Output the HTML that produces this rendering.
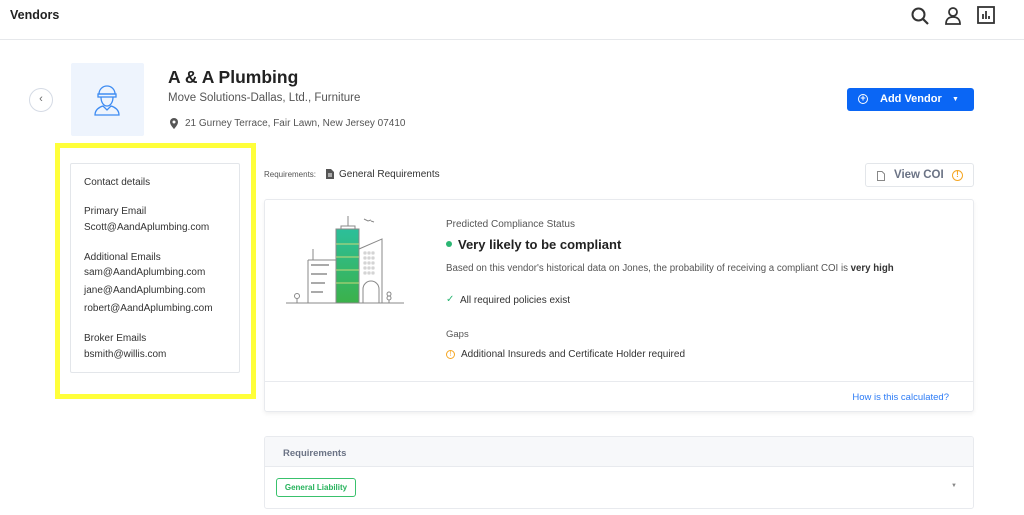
<!DOCTYPE html>
<html><head><meta charset="utf-8"><style>
*{box-sizing:border-box;margin:0;padding:0}
body{width:1024px;height:515px;background:#fff;font-family:"Liberation Sans",sans-serif;position:relative;overflow:hidden;color:#222}
.a{position:absolute;white-space:nowrap}
</style></head><body>
<div class="a" style="left:10px;top:8px;font-size:12.5px;font-weight:bold;color:#222">Vendors</div>
<svg class="a" style="left:910px;top:6px" width="20" height="20" viewBox="0 0 20 20"><circle cx="8.5" cy="8.5" r="6" fill="none" stroke="#333" stroke-width="2"/><path d="M13 13l5 5" stroke="#333" stroke-width="2.2"/></svg>
<svg class="a" style="left:944px;top:6px" width="18" height="20" viewBox="0 0 18 20"><circle cx="9" cy="6" r="4" fill="none" stroke="#333" stroke-width="1.8"/><path d="M2 18c0-5 3-7 7-7s7 2 7 7z" fill="none" stroke="#333" stroke-width="1.8"/></svg>
<svg class="a" style="left:977px;top:6px" width="18" height="18" viewBox="0 0 18 18"><rect x="1" y="1" width="16" height="16" fill="none" stroke="#333" stroke-width="1.8"/><path d="M6 13V8M9 13V5M12 13v-3" stroke="#333" stroke-width="1.8"/></svg>
<div class="a" style="left:0;top:39px;width:1024px;height:1px;background:#e6e8eb"></div>

<div class="a" style="left:29px;top:88px;width:24px;height:24px;border:1px solid #d5dbe5;border-radius:50%;font-size:11px;color:#666;text-align:center;line-height:21px">‹</div>
<div class="a" style="left:71px;top:63px;width:73px;height:73px;background:#eef4fd;border-radius:2px"></div>
<svg class="a" style="left:91px;top:82px" width="32" height="34" viewBox="0 0 32 34"><g fill="none" stroke="#3d8bf2" stroke-width="1.3"><path d="M8 12a8 8 0 0 1 16 0z"/><rect x="7" y="12" width="18" height="3"/><path d="M10 15c0 6 3 9 6 9s6-3 6-9"/><path d="M4 33c0-5 4-8 8-9l4 4 4-4c4 1 8 4 8 9z"/></g></svg>
<div class="a" style="left:168px;top:67px;font-size:17.5px;font-weight:bold;color:#222">A &amp; A Plumbing</div>
<div class="a" style="left:168px;top:92px;font-size:11.5px;color:#555">Move Solutions-Dallas, Ltd., Furniture</div>
<svg class="a" style="left:170px;top:118px" width="8" height="11" viewBox="0 0 8 11"><path d="M4 0a4 4 0 0 1 4 4c0 3-4 7-4 7S0 7 0 4a4 4 0 0 1 4-4z" fill="#555"/><circle cx="4" cy="4" r="1.5" fill="#fff"/></svg>
<div class="a" style="left:185px;top:118px;font-size:10px;color:#555">21 Gurney Terrace, Fair Lawn, New Jersey 07410</div>

<div class="a" style="left:847px;top:88px;width:127px;height:23px;background:#0a66f5;border-radius:3px;color:#fff;font-size:11px;font-weight:bold;line-height:23px">
<span style="position:absolute;left:11px;top:6px;width:10px;height:10px;border:1.3px solid #fff;border-radius:50%;font-size:9px;line-height:7px;text-align:center">+</span>
<span style="position:absolute;left:33px">Add Vendor</span><span style="position:absolute;left:105px;font-size:7px">▼</span></div>

<div class="a" style="left:55px;top:143px;width:201px;height:256px;border:5px solid #ffff3a"></div>
<div class="a" style="left:70px;top:163px;width:170px;height:210px;border:1px solid #e3e6ea;border-radius:2px;font-size:10px;color:#333">
<div class="a" style="left:13px;top:13px">Contact details</div>
<div class="a" style="left:13px;top:42px">Primary Email</div>
<div class="a" style="left:13px;top:58px">Scott@AandAplumbing.com</div>
<div class="a" style="left:13px;top:88px">Additional Emails</div>
<div class="a" style="left:13px;top:103px">sam@AandAplumbing.com</div>
<div class="a" style="left:13px;top:121px">jane@AandAplumbing.com</div>
<div class="a" style="left:13px;top:139px">robert@AandAplumbing.com</div>
<div class="a" style="left:13px;top:169px">Broker Emails</div>
<div class="a" style="left:13px;top:185px">bsmith@willis.com</div>
</div>

<div class="a" style="left:264px;top:170px;font-size:8px;color:#555">Requirements:</div>
<svg class="a" style="left:326px;top:169px" width="8" height="10" viewBox="0 0 8 10"><path d="M0 0h5l3 3v7H0z" fill="#555"/><path d="M2 5h4M2 7h4" stroke="#fff"/></svg>
<div class="a" style="left:339px;top:169px;font-size:10px;color:#333">General Requirements</div>

<div class="a" style="left:865px;top:163px;width:109px;height:24px;border:1px solid #e3e6ea;border-radius:3px">
<svg class="a" style="left:11px;top:7px" width="8" height="10" viewBox="0 0 8 10"><path d="M.5.5h4.5l2.5 2.5v6.5h-7z" fill="none" stroke="#888"/></svg>
<div class="a" style="left:28px;top:5px;font-size:11.5px;font-weight:bold;color:#6b7385">View COI</div>
<div class="a" style="left:86px;top:6px;width:11px;height:11px;border:1.3px solid #f5a623;border-radius:50%;color:#f5a623;font-size:8px;line-height:8px;text-align:center;font-weight:bold">!</div>
</div>

<div class="a" style="left:264px;top:199px;width:710px;height:213px;border:1px solid #e8eaee;border-radius:3px;box-shadow:0 2px 5px rgba(0,0,0,.06)">
<div class="a" style="left:0;top:181px;width:708px;height:1px;background:#e8eaee"></div>
<div class="a" style="right:24px;top:192px;font-size:9.5px;color:#2d7cf6">How is this calculated?</div>
</div>
<svg class="a" style="left:286px;top:214px" width="120" height="92" viewBox="0 0 120 92">
<defs><linearGradient id="g" x1="0" y1="0" x2="0" y2="1"><stop offset="0" stop-color="#2cbf9a"/><stop offset="1" stop-color="#3bb14a"/></linearGradient></defs>
<g stroke="#888" stroke-width="1" fill="none">
<path d="M62 2v10M58 12h8M55 15v-3h14v3"/>
<rect x="50" y="15" width="23" height="74" fill="url(#g)"/>
<path d="M50 30h23M50 43h23M50 56h23M50 69h23" stroke="#c8d87a"/>
<path d="M73 35l23-10v64"/>
<path d="M22 46h28M27 46v-6M27 35v5"/>
<path d="M22 46v43M0 89h118"/>
<path d="M77 75a8 8 0 0 1 16 0v14M77 75v14"/>
<circle cx="11" cy="82" r="2.5"/><path d="M11 85v4"/>
<circle cx="103" cy="80" r="2"/><circle cx="103" cy="84" r="2"/><path d="M103 86v3"/>
<path d="M78 5l4 2 3-1M85 7l3 1"/>
</g>
<g fill="#aaa"><rect x="25" y="50" width="18" height="2"/><rect x="25" y="59" width="16" height="2"/><rect x="25" y="68" width="14" height="2"/><rect x="25" y="77" width="12" height="2"/></g>
<g fill="none" stroke="#aaa" stroke-width=".6">
<rect x="78" y="38" width="2" height="2"/><rect x="82" y="38" width="2" height="2"/><rect x="86" y="38" width="2" height="2"/>
<rect x="78" y="43" width="2" height="2"/><rect x="82" y="43" width="2" height="2"/><rect x="86" y="43" width="2" height="2"/>
<rect x="78" y="48" width="2" height="2"/><rect x="82" y="48" width="2" height="2"/><rect x="86" y="48" width="2" height="2"/>
<rect x="78" y="53" width="2" height="2"/><rect x="82" y="53" width="2" height="2"/><rect x="86" y="53" width="2" height="2"/>
<rect x="78" y="58" width="2" height="2"/><rect x="82" y="58" width="2" height="2"/><rect x="86" y="58" width="2" height="2"/>
</g></svg>

<div class="a" style="left:446px;top:219px;font-size:10px;color:#555">Predicted Compliance Status</div>
<div class="a" style="left:446px;top:241px;width:6px;height:6px;border-radius:50%;background:#2bb673"></div>
<div class="a" style="left:458px;top:237px;font-size:13px;font-weight:bold;color:#222">Very likely to be compliant</div>
<div class="a" style="left:446px;top:263px;font-size:9.7px;color:#555">Based on this vendor's historical data on Jones, the probability of receiving a compliant COI is <b style="color:#333">very high</b></div>
<div class="a" style="left:446px;top:294px;font-size:10px;color:#2bb673">✓</div>
<div class="a" style="left:460px;top:295px;font-size:10px;color:#333">All required policies exist</div>
<div class="a" style="left:446px;top:329px;font-size:9.5px;color:#555">Gaps</div>
<div class="a" style="left:446px;top:350px;width:9px;height:9px;border:1px solid #f5a623;border-radius:50%;color:#f5a623;font-size:7px;line-height:7px;text-align:center">!</div>
<div class="a" style="left:461px;top:349px;font-size:10px;color:#333">Additional Insureds and Certificate Holder required</div>

<div class="a" style="left:264px;top:436px;width:710px;height:73px;border:1px solid #e8eaee;border-radius:3px;overflow:hidden">
<div class="a" style="left:0;top:0;width:710px;height:30px;background:#f7f8fa;border-bottom:1px solid #e8eaee"></div>
<div class="a" style="left:18px;top:11px;font-size:9.5px;font-weight:bold;color:#6b7385">Requirements</div>
<div class="a" style="left:11px;top:41px;width:80px;height:19px;border:1px solid #39c16c;border-radius:3px;color:#27b35c;font-size:8px;font-weight:bold;line-height:17px;text-align:center">General Liability</div>
<div class="a" style="left:686px;top:46px;font-size:6px;color:#888">▼</div>
</div>
</body></html>
